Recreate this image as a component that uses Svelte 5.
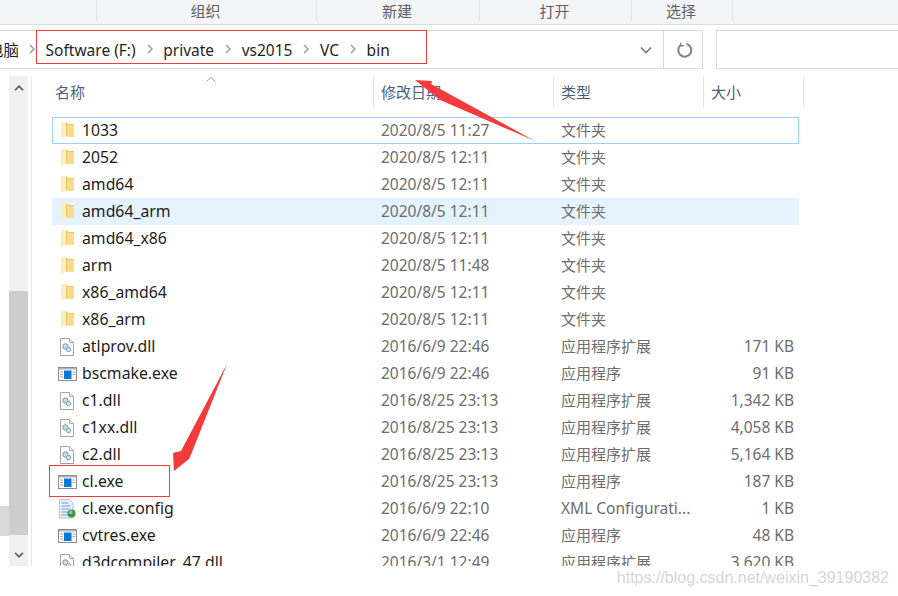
<script lang="ts">
  type Row = { name: string; date: string; type: string; size?: string; icon: string; cls?: string };

  const groups = [
    { label: '组织', width: 220 },
    { label: '新建', width: 163 },
    { label: '打开', width: 152 },
    { label: '选择', width: 102 },
  ];
  const crumbs = ['Software (F:)', 'private', 'vs2015', 'VC', 'bin'];
  const cols = [
    { label: '名称', cls: 'c-name' },
    { label: '修改日期', cls: 'c-date' },
    { label: '类型', cls: 'c-type' },
    { label: '大小', cls: 'c-size' },
  ];
  const DIR = '文件夹';
  const EXT = '应用程序扩展';
  const APP = '应用程序';
  const rows: Row[] = [
    { name: '1033', date: '2020/8/5 11:27', type: DIR, icon: 'dir', cls: 'focused' },
    { name: '2052', date: '2020/8/5 12:11', type: DIR, icon: 'dir' },
    { name: 'amd64', date: '2020/8/5 12:11', type: DIR, icon: 'dir' },
    { name: 'amd64_arm', date: '2020/8/5 12:11', type: DIR, icon: 'dir', cls: 'hover' },
    { name: 'amd64_x86', date: '2020/8/5 12:11', type: DIR, icon: 'dir' },
    { name: 'arm', date: '2020/8/5 11:48', type: DIR, icon: 'dir' },
    { name: 'x86_amd64', date: '2020/8/5 12:11', type: DIR, icon: 'dir' },
    { name: 'x86_arm', date: '2020/8/5 12:11', type: DIR, icon: 'dir' },
    { name: 'atlprov.dll', date: '2016/6/9 22:46', type: EXT, size: '171 KB', icon: 'dll' },
    { name: 'bscmake.exe', date: '2016/6/9 22:46', type: APP, size: '91 KB', icon: 'exe' },
    { name: 'c1.dll', date: '2016/8/25 23:13', type: EXT, size: '1,342 KB', icon: 'dll' },
    { name: 'c1xx.dll', date: '2016/8/25 23:13', type: EXT, size: '4,058 KB', icon: 'dll' },
    { name: 'c2.dll', date: '2016/8/25 23:13', type: EXT, size: '5,164 KB', icon: 'dll' },
    { name: 'cl.exe', date: '2016/8/25 23:13', type: APP, size: '187 KB', icon: 'exe' },
    { name: 'cl.exe.config', date: '2016/6/9 22:10', type: 'XML Configurati...', size: '1 KB', icon: 'cfg' },
    { name: 'cvtres.exe', date: '2016/6/9 22:46', type: APP, size: '48 KB', icon: 'exe' },
    { name: 'd3dcompiler_47.dll', date: '2016/3/1 12:49', type: EXT, size: '3,620 KB', icon: 'dll' },
  ];
</script>

<div class="page">
  <div class="toolbar">
    {#each groups as g}
      <div class="group" style="width: {g.width}px">{g.label}</div>
    {/each}
  </div>

  <div class="addr-row">
    <div class="addr">
      <span class="crumb first">电脑</span>
      {#each crumbs as c}
        <svg class="chev" viewBox="0 0 8 10" fill="none" stroke="#a0a0a0" stroke-width="1.5"><path d="M2 1l4 4-4 4"/></svg>
        <span class="crumb">{c}</span>
      {/each}
      <svg class="drop" viewBox="0 0 12 8" fill="none" stroke="#777" stroke-width="1.6"><path d="M1 1.500l5 5 5-5"/></svg>
      <div class="refresh">
        <svg viewBox="0 0 16 16" width="16" height="16" fill="none" stroke="#808080" stroke-width="2">
          <path d="M3.800 3A6.500 6.500 0 1 0 9.500 1.900"/>
          <path d="M3.600 .5v3.200h3.200" stroke-width="1.400"/>
        </svg>
      </div>
    </div>
    <div class="search"></div>
  </div>

  <div class="main">
    <div class="edge"><div class="edge-thumb"></div></div>
    <div class="scroll">
      <div class="arrow">
        <svg viewBox="0 0 10 6" width="10" height="6" fill="none" stroke="#555" stroke-width="1.6"><path d="M1 5.200l4-4 4 4"/></svg>
      </div>
      <div class="track"><div class="thumb"></div></div>
      <div class="arrow low">
        <svg viewBox="0 0 10 6" width="10" height="6" fill="none" stroke="#555" stroke-width="1.6"><path d="M1 .8l4 4 4-4"/></svg>
      </div>
    </div>
    <div class="pane">
      <div class="head">
        {#each cols as c}
          <div class="hcell {c.cls}">{c.label}</div>
        {/each}
        <svg class="sort" viewBox="0 0 10 5" width="10" height="5" fill="none" stroke="#999"><path d="M.5 4.500L5 .5l4.500 4"/></svg>
      </div>
      <div class="list">
        {#each rows as r}
          <div class="row {r.cls ?? ''}">
            <div class="c-name name">
              <div class="ico">
                {#if r.icon === 'dir'}
                  <svg viewBox="0 0 13 17" width="13" height="17">
                    <path d="M0 0h6l1 2h6v12.500H0z" fill="#f2c95f"/>
                    <path d="M6 3h7v11.500H6z" fill="#f8dc8c"/>
                    <path d="M0 0h6v14L0 17z" fill="#fdeebd"/>
                    <path d="M5.500 1v13.200" stroke="#ecc76a" stroke-width="1"/>
                  </svg>
                {:else if r.icon === 'dll'}
                  <svg viewBox="0 0 14 18" width="14" height="18">
                    <path d="M.5.5h9l4 4v13H.5z" fill="#fff" stroke="#a3a3a3"/>
                    <path d="M9.500.5v4h4" fill="#e6e6e6" stroke="#b0b0b0"/>
                    <circle cx="5.500" cy="8.500" r="2.700" fill="#d8d8d8" stroke="#8f8f8f"/>
                    <circle cx="8.500" cy="11.500" r="2.200" fill="#d2e6f6" stroke="#6f9fc8"/>
                  </svg>
                {:else if r.icon === 'exe'}
                  <svg viewBox="0 0 19 14" width="19" height="14">
                    <rect x=".5" y=".5" width="18" height="13" fill="#fff" stroke="#8c8c8c"/>
                    <rect x="1" y="1" width="17" height="1.500" fill="#b4b4b4"/>
                    <rect x="6" y="3.500" width="7.500" height="8.500" fill="#0a78d7"/>
                    <path d="M2 5h3M2 7.500h3M2 10h3M14.500 5h3M14.500 7.500h3" stroke="#a8a8a8"/>
                  </svg>
                {:else}
                  <svg viewBox="0 0 17 20" width="17" height="20">
                    <path d="M.5.5h10l3.500 3.500v15H.5z" fill="#e9f1fb" stroke="#b5c3d8"/>
                    <path d="M2.500 4h7M2.500 7h9M2.500 10h8M2.500 13h7M2.500 16h6" stroke="#6b98d4"/>
                    <circle cx="12.500" cy="14.500" r="4" fill="#3d9440"/>
                    <circle cx="11.800" cy="13.400" r="1.800" fill="#7bc7ea"/>
                  </svg>
                {/if}
              </div>
              <span>{r.name}</span>
            </div>
            <div class="c-date meta">{r.date}</div>
            <div class="c-type meta" class:latin={r.type.startsWith('XML')}>{r.type}</div>
            <div class="c-size meta">{r.size ?? ''}</div>
          </div>
        {/each}
      </div>
    </div>
  </div>

  <div class="mark">https://blog.csdn.net/weixin_39190382</div>

  <div class="box box-addr"></div>
  <div class="box box-exe"></div>
  <svg class="overlay" viewBox="0 0 898 596" width="898" height="596">
    <polygon points="415,80 432,81 431,84 535,141 440,100" fill="#f33b3b"/>
    <polygon points="227,364 192,452 189,459 174,471 173,453 181,451" fill="#f33b3b"/>
  </svg>
</div>

<style>
  :global(body) { margin: 0; background: #fff; }
  .page {
    position: relative;
    width: 898px;
    height: 596px;
    overflow: hidden;
    background: #fff;
    font-family: "Noto Sans", "Noto Sans CJK SC", sans-serif;
    font-size: 15px;
  }
  .toolbar {
    display: flex;
    height: 24px;
    padding-left: 96px;
    background: #f4f5f7;
    border-bottom: 1px solid #dcdcdc;
  }
  .group {
    border-left: 1px solid #e2e3e5;
    margin-bottom: 3px;
    text-align: center;
    line-height: 23px;
    font-size: 15px;
    color: #5f5f5f;
    box-sizing: border-box;
    padding-right: 2px;
  }
  .group:last-child { border-right: 1px solid #e2e3e5; }
  .addr-row {
    display: flex;
    height: 39px;
    margin-top: 5px;
    gap: 13px;
    width: 920px;
  }
  .addr {
    width: 703px;
    flex: none;
    box-sizing: border-box;
    border: 1px solid #d9d9d9;
    border-left: none;
    display: flex;
    align-items: center;
    color: #1f1f1f;
    font-size: 15.500px;
  }
  .crumb { white-space: nowrap; }
  .crumb.first { margin-left: -12px; width: 30px; }
  .chev { width: 8px; height: 10px; margin: 0 9.600px 2px 10px; }
  .drop { width: 12px; height: 8px; margin-left: auto; margin-right: 11px; }
  .refresh {
    width: 39px;
    align-self: stretch;
    border-left: 1px solid #d9d9d9;
    display: flex;
    align-items: center;
    justify-content: center;
    padding-left: 3px;
    box-sizing: border-box;
  }
  .search {
    flex: 1;
    border: 1px solid #d9d9d9;
    border-right: none;
  }
  .main {
    display: flex;
    height: 490px;
    margin-top: 7px;
  }
  .edge { width: 9px; position: relative; }
  .edge-thumb {
    position: absolute;
    top: 430px;
    left: 0;
    width: 9px;
    height: 30px;
    background: #d9d9d9;
  }
  .scroll {
    width: 19px;
    display: flex;
    flex-direction: column;
    background: #f0f0f0;
  }
  .arrow {
    height: 23px;
    display: flex;
    align-items: center;
    justify-content: center;
  }
  .arrow.low { height: 31px; padding-top: 9px; box-sizing: border-box; }
  .track { flex: 1; }
  .thumb {
    height: 244px;
    margin-top: 192px;
    background: #cdcdcd;
  }
  .pane {
    flex: 1;
    margin-left: 3px;
    border-left: 1px solid #e8e8e8;
    overflow: hidden;
    position: relative;
    padding-left: 20px;
  }
  .head {
    display: grid;
    grid-template-columns: 322px 180px 150px 100px;
    height: 32px;
  }
  .hcell {
    border-right: 1px solid #e5e5e5;
    padding-left: 3px;
    line-height: 32px;
    color: #4c607a;
    font-size: 15px;
    box-sizing: border-box;
  }
  .hcell.c-date, .hcell.c-type, .hcell.c-size { padding-left: 7px; }
  .sort { position: absolute; left: 174px; top: 1px; }
  .list { padding-top: 9px; }
  .row {
    display: grid;
    grid-template-columns: 322px 180px 150px 100px;
    height: 27px;
    line-height: 27px;
    width: 747px;
    box-sizing: border-box;
    white-space: nowrap;
    font-size: 15.500px;
  }
  .row.hover { background: #e5f3ff; }
  .row.focused { box-shadow: inset 0 0 0 1px #99d1ff; }
  .name {
    display: flex;
    align-items: center;
    color: #1c1c1c;
    font-size: 15.800px;
  }
  .ico {
    width: 30px;
    flex: none;
    display: flex;
    align-items: center;
    justify-content: center;
  }
  .ico svg { display: block; }
  .meta { color: #6d6d6d; padding-left: 7px; }
  .c-type.meta { font-size: 15px; }
  .c-type.meta.latin { font-size: 15.500px; }
  .c-size.meta { padding-right: 10px; text-align: right; }
  .mark {
    position: absolute;
    right: 9px;
    bottom: 9px;
    font-family: "Liberation Sans", sans-serif;
    font-size: 16px;
    color: rgba(170, 170, 170, 0.5);
  }
  .box {
    position: absolute;
    border: 1px solid #f33b3b;
    box-sizing: border-box;
  }
  .box-addr { left: 36px; top: 30px; width: 391px; height: 34px; }
  .box-exe { left: 49px; top: 465px; width: 121px; height: 32px; }
  .overlay { position: absolute; inset: 0; pointer-events: none; }
</style>
